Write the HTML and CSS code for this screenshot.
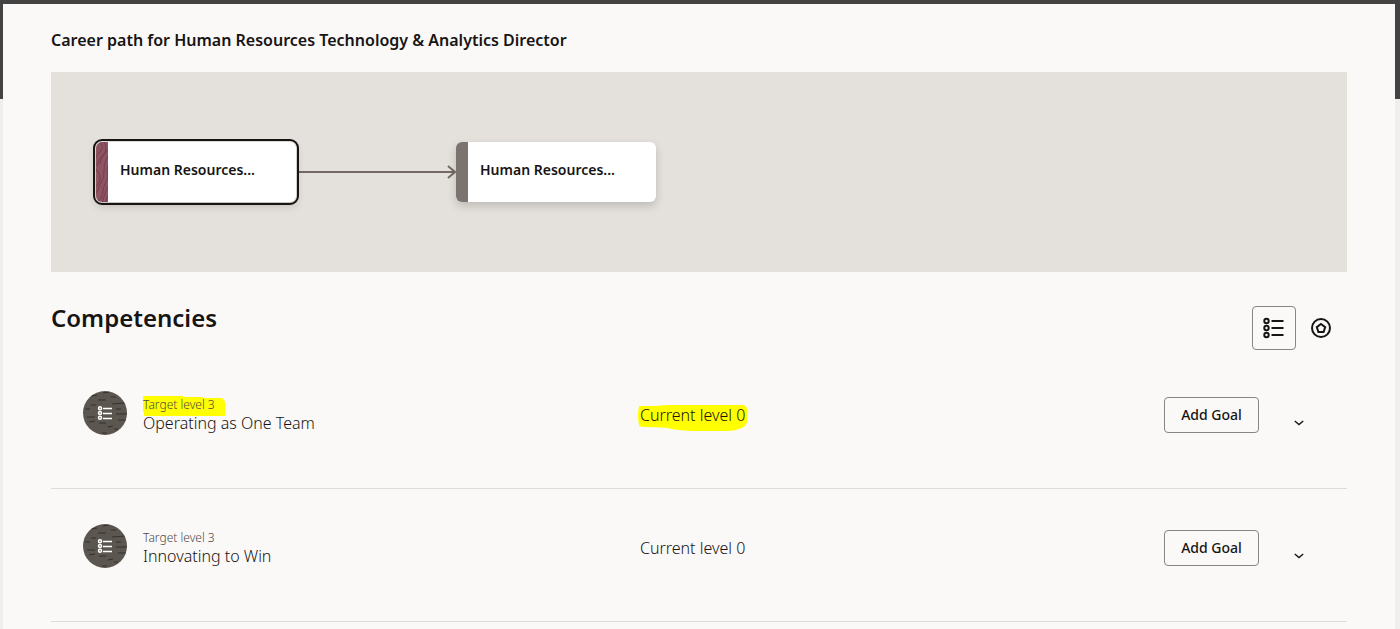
FILE: index.html
```html
<!DOCTYPE html>
<html lang="en">
<head>
<meta charset="utf-8">
<title>Career path</title>
<link rel="stylesheet" href="styles.css">
</head>
<body>
<svg class="defs" aria-hidden="true">
  <symbol id="list" viewBox="0 0 24 24">
    <g fill="none" stroke="currentColor" stroke-width="2">
      <circle cx="4.5" cy="5" r="2.2"/><circle cx="4.5" cy="12" r="2.2"/><circle cx="4.5" cy="19" r="2.2"/>
      <path d="M9.5 5h12M9.5 12h12M9.5 19h12"/>
    </g>
  </symbol>
  <symbol id="list-small" viewBox="0 0 16 16">
    <g fill="none" stroke="currentColor" stroke-width="1.5">
      <circle cx="3" cy="3.2" r="1.5"/><circle cx="3" cy="8" r="1.5"/><circle cx="3" cy="12.8" r="1.5"/>
      <path d="M6 3.5h9M6 8.5h9M6 13.5h9"/>
    </g>
  </symbol>
  <symbol id="bark" viewBox="0 0 44 44">
    <rect width="44" height="44" fill="#5b5650"/>
    <path d="M20 2l6-1M8 5l6-1M15 9h8M29 13l13-1M2 18h5M33 23h11M4 26h8M35 29h8M6 31l6-1M16 32h7M25 36l5-1M31 38h4M19 42h5M8 14h5M33 18h5M28 6h5" fill="none" stroke="#35312d" stroke-width="1.2"/>
  </symbol>
  <symbol id="chevron" viewBox="0 0 12 12">
    <path d="M1.8 4l4.2 3.6L10.2 4" fill="none" stroke="currentColor" stroke-width="1.4"/>
  </symbol>
</svg>
<main class="panel">
  <h1 class="title">Career path for Human Resources Technology &amp; Analytics Director</h1>
  <section class="canvas" aria-label="Career path">
    <svg class="link" width="160" height="14" viewBox="0 0 160 14" aria-hidden="true">
      <path d="M0 7h157M150 1l7 6-7 6" fill="none" stroke="#736a66" stroke-width="2"/>
    </svg>
    <div class="node node-selected">
      <svg class="strip" viewBox="0 0 12 60" aria-hidden="true">
        <rect width="12" height="60" fill="#8f5463"/>
        <path d="M3-2Q9 5 4 10T0 17M7-2Q13 8 7 13T1 24M12 8Q4 16 4 22M12 14Q7 22 8 29T4 42Q2 49 0 51M0 27Q6 34 3 40T-1 45M12 22Q10 31 12 36Q7 45 7 50T1 61M12 44Q8 53 6 62M12 53L9 62" fill="none" stroke="#733f4d" stroke-width="1"/>
      </svg>
      <span class="node-name">Human Resources...</span>
    </div>
    <div class="node node-next">
      <span class="strip strip-plain"></span>
      <span class="node-name">Human Resources...</span>
    </div>
  </section>
  <header class="section-head">
    <h2 class="heading">Competencies</h2>
    <div class="views">
      <button class="view view-on" type="button" aria-label="List view"><svg class="icon"><use href="#list"/></svg></button>
      <button class="view" type="button" aria-label="Chart view">
        <svg class="icon" viewBox="0 0 24 24"><g fill="none" stroke="currentColor" stroke-width="2"><circle cx="12" cy="12" r="9"/><path d="M12 8l4.2 3.1-1.6 4.9H9.4l-1.6-4.9z"/></g></svg>
      </button>
    </div>
  </header>
  <ul class="rows">
    <li class="row">
      <svg class="avatar" viewBox="0 0 44 44" aria-hidden="true"><use href="#bark"/><use class="avatar-icon" href="#list-small" x="14" y="14" width="16" height="16"/></svg>
      <div class="info">
        <span class="target"><svg class="marker marker-target" viewBox="0 0 83 22" preserveAspectRatio="none" aria-hidden="true"><path d="M0 1H40V2H60V3H78Q82 4 82 8V21H1V17H0Z" fill="#ff0"/></svg><span class="text">Target level 3</span></span>
        <span class="name">Operating as One Team</span>
      </div>
      <div class="current"><svg class="marker marker-current" viewBox="0 0 110 28" preserveAspectRatio="none" aria-hidden="true"><path d="M1 2H20Q22 1 35 1H105Q109 2 109 5V18Q108 23 101 25Q96 27 90 27H55Q35 26 30 24Q20 23 8 23Q1 23 1 21Q-1 12 1 2Z" fill="#ff0"/></svg><span class="text">Current level 0</span></div>
      <div class="actions">
        <button class="goal" type="button">Add Goal</button>
        <button class="expand" type="button" aria-label="Expand"><svg class="chevron"><use href="#chevron"/></svg></button>
      </div>
    </li>
    <li class="row">
      <svg class="avatar" viewBox="0 0 44 44" aria-hidden="true"><use href="#bark"/><use class="avatar-icon" href="#list-small" x="14" y="14" width="16" height="16"/></svg>
      <div class="info">
        <span class="target">Target level 3</span>
        <span class="name">Innovating to Win</span>
      </div>
      <div class="current">Current level 0</div>
      <div class="actions">
        <button class="goal" type="button">Add Goal</button>
        <button class="expand" type="button" aria-label="Expand"><svg class="chevron"><use href="#chevron"/></svg></button>
      </div>
    </li>
  </ul>
</main>
</body>
</html>
```
FILE: styles.css
```css
* { box-sizing: border-box; }
body {
  margin: 0;
  padding: 4px 5px 0 3px;
  background: linear-gradient(#434343 99px, #f0efed 99px) no-repeat #f0efed;
  color: #161513;
  font: 16px/20px "Noto Sans", "Open Sans", sans-serif;
}
.defs { display: none; }
.panel {
  min-height: calc(100vh - 4px);
  padding: 24px 48px 0;
  background: #fbf9f8;
}
.title { margin: 0 0 20px; font-size: 16px; line-height: 24px; font-weight: 600; }
.canvas { position: relative; height: 200px; background: #e4e1dc; }
.node {
  position: absolute;
  display: flex;
  align-items: center;
  width: 200px;
  height: 60px;
  background: #fff;
  border-radius: 6px;
  box-shadow: 0 4px 8px rgba(22, 21, 19, 0.18);
}
.node-selected { left: 45px; top: 70px; outline: 2px solid #161513; outline-offset: 1px; }
.node-next { left: 405px; top: 70px; }
.link { position: absolute; left: 247px; top: 93px; }
.strip { flex: none; width: 12px; height: 60px; border-radius: 6px 0 0 6px; }
.strip-plain { background: #7a736e; }
.node-name { padding: 0 0 4px 12px; font-size: 14px; font-weight: 600; }
.section-head {
  display: flex;
  align-items: flex-start;
  justify-content: space-between;
  padding: 30px 4px 0 0;
}
.heading { margin: 0; font-size: 24px; line-height: 32px; font-weight: 600; }
.views { display: flex; gap: 3px; padding-top: 4px; }
.view {
  display: grid;
  place-items: center;
  width: 44px;
  height: 44px;
  padding: 0;
  border: 1px solid transparent;
  border-radius: 4px;
  background: transparent;
  color: inherit;
}
.view-on { border-color: #8b8580; }
.icon { width: 24px; height: 24px; }
.rows { margin: 6px 0 0; padding: 0; list-style: none; }
.row {
  display: grid;
  grid-template-columns: 44px minmax(0, 496fr) minmax(0, 524fr) auto;
  align-items: start;
  column-gap: 16px;
  height: 133px;
  padding: 35px 36px 0 32px;
  border-bottom: 1px solid #dedbd8;
}
.avatar { width: 44px; height: 44px; border-radius: 50%; }
.avatar-icon { color: #fff; }
.info { display: flex; flex-direction: column; align-items: flex-start; padding-top: 6px; }
.target, .current { position: relative; font-weight: 300; }
.target { font-size: 12px; line-height: 16px; color: #4e4a46; }
.name { font-weight: 300; }
.current { padding-top: 14px; }
.text { position: relative; }
.marker { position: absolute; }
.marker-target { left: 0; top: -2px; width: 83px; height: 22px; }
.marker-current { left: -2px; top: 13px; width: 110px; height: 28px; }
.actions { display: flex; gap: 28px; padding-top: 6px; }
.goal {
  width: 95px;
  height: 36px;
  padding: 0;
  border: 1px solid #8b8580;
  border-radius: 4px;
  background: transparent;
  color: inherit;
  font: 500 14px/20px "Noto Sans", "Open Sans", sans-serif;
}
.expand {
  width: 24px;
  height: 24px;
  margin-top: 14px;
  padding: 0;
  border: 0;
  background: transparent;
  color: inherit;
  display: grid;
  place-items: center;
}
.chevron { width: 12px; height: 12px; }
```
